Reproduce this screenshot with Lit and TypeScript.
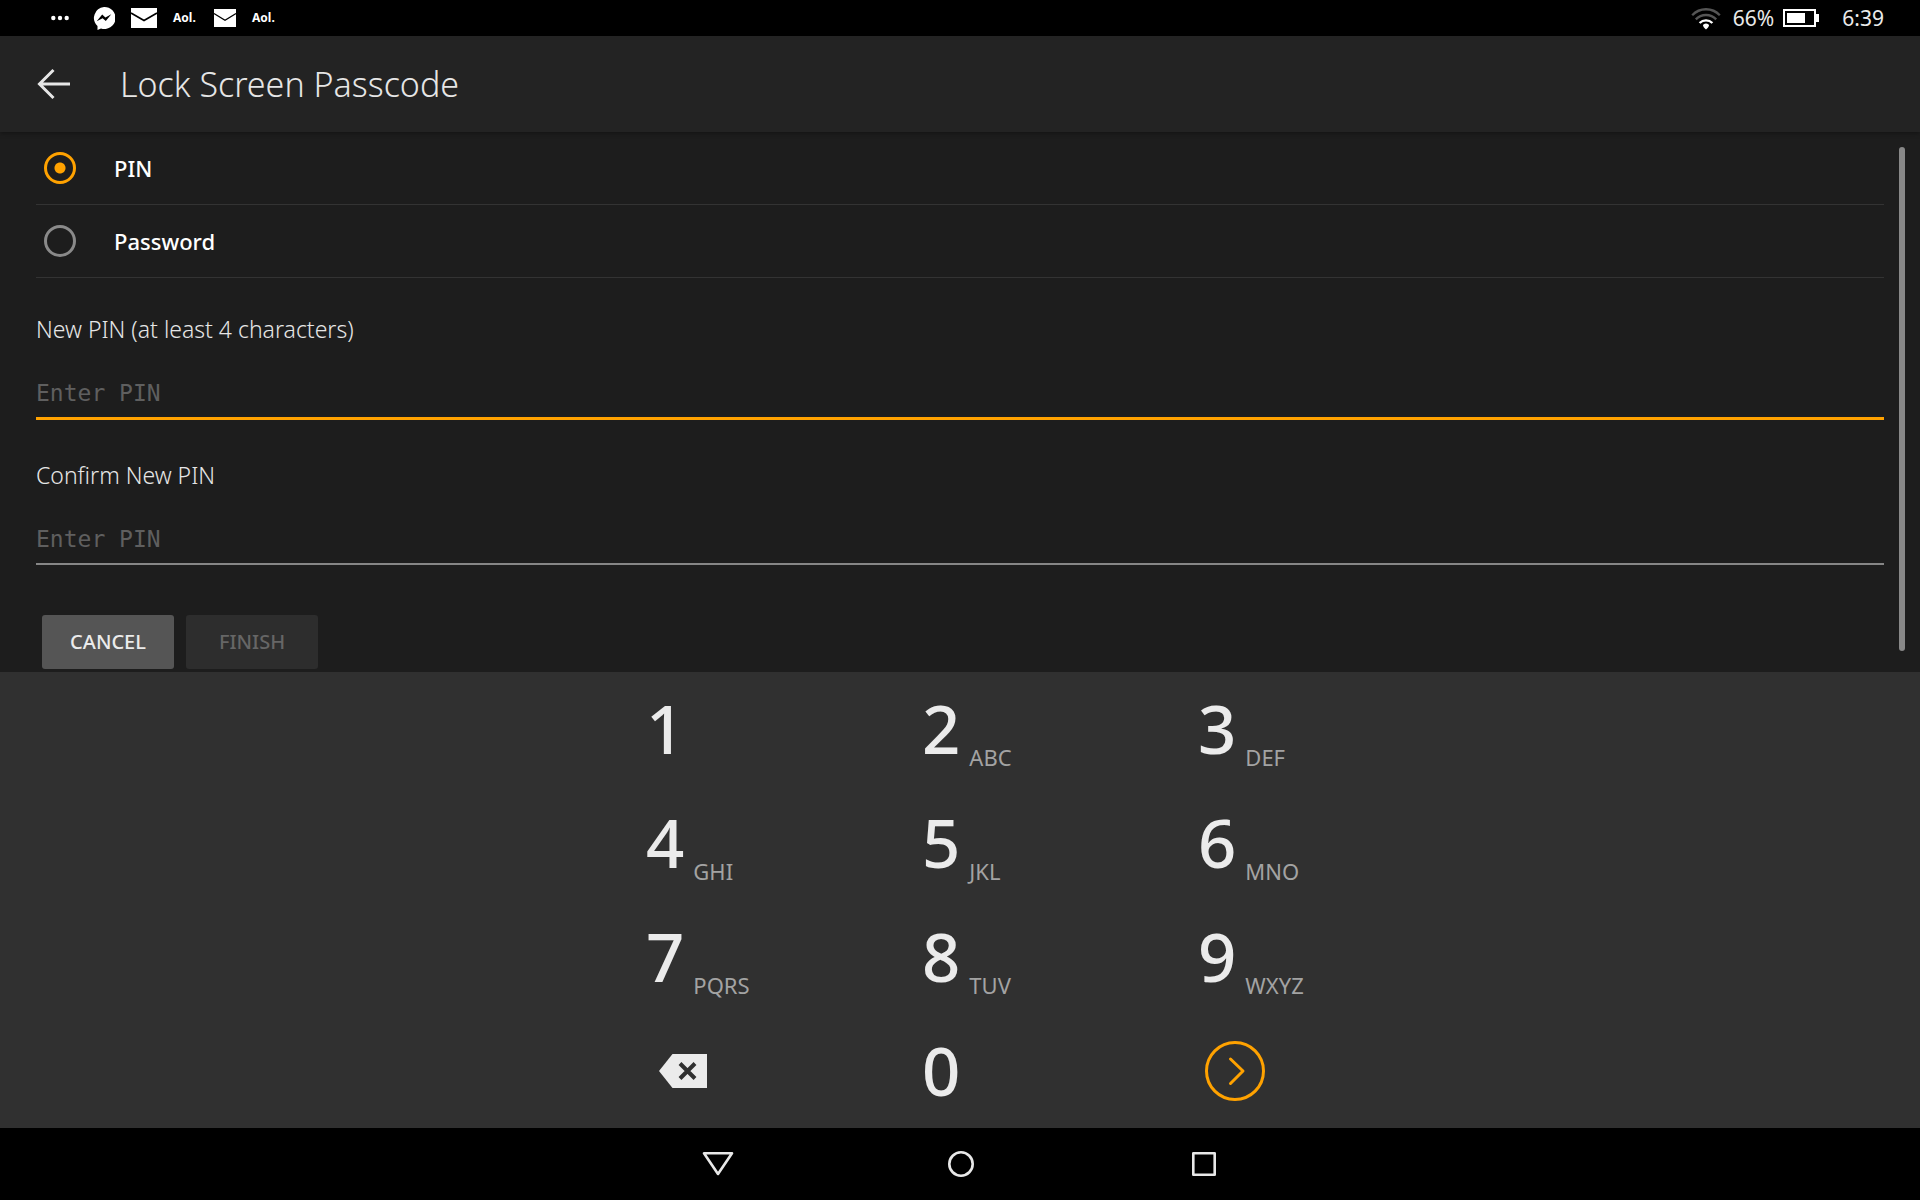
import { LitElement, html, css, svg } from "lit";
import { customElement, property, state } from "lit/decorators.js";

interface Key {
  digit: string;
  letters: string;
}

const KEYS: Key[] = [
  { digit: "1", letters: "" },
  { digit: "2", letters: "ABC" },
  { digit: "3", letters: "DEF" },
  { digit: "4", letters: "GHI" },
  { digit: "5", letters: "JKL" },
  { digit: "6", letters: "MNO" },
  { digit: "7", letters: "PQRS" },
  { digit: "8", letters: "TUV" },
  { digit: "9", letters: "WXYZ" },
];

@customElement("status-bar")
class StatusBar extends LitElement {
  static styles = css`
    :host {
      display: flex;
      justify-content: space-between;
      align-items: center;
      height: 36px;
      padding: 0 36px 0 50px;
      background: #000;
      color: #eaeaea;
    }
    .group {
      display: flex;
      align-items: center;
    }
    .left {
      gap: 16px;
    }
    .dots {
      margin-right: 7px;
    }
    .aol {
      width: 25px;
      font: 700 12px/16px "Noto Sans", sans-serif;
      color: #fff;
    }
    .text {
      font: 400 21px/36px "Noto Sans", sans-serif;
    }
    .wifi {
      margin-right: 12px;
    }
    .battery {
      margin: 0 22px 0 9px;
    }
    svg {
      display: block;
    }
  `;

  render() {
    const mail = (w: number, h: number) => html`
      <svg width=${w} height=${h} viewBox="0 0 26 20" preserveAspectRatio="none">
        <rect width="26" height="20" fill="#fff" />
        <path d="M0 5 L13 12.5 L26 5" fill="none" stroke="#000" stroke-width="1.6" />
      </svg>`;
    return html`
      <div class="group left">
        <svg class="dots" width="20" height="6" viewBox="0 0 20 6" fill="#fff">
          <circle cx="3.3" cy="3" r="2.2" />
          <circle cx="10" cy="3" r="2.2" />
          <circle cx="16.7" cy="3" r="2.2" />
        </svg>
        <svg width="22" height="24" viewBox="0 0 22 24">
          <path d="M11 1a11 11 0 1 1-3 21.400L4.500 24V20A11 11 0 0 1 11 1z" fill="#fff" />
          <path d="M3.700 15.300 9.200 8.600 12.400 11.500 18.300 8.300 12.800 15 9.600 12.200z" fill="#000" />
        </svg>
        ${mail(26, 20)}
        <span class="aol">Aol.</span>
        ${mail(22, 18)}
        <span class="aol">Aol.</span>
      </div>
      <div class="group">
        <svg class="wifi" width="30" height="24" viewBox="0 0 30 24" fill="none" stroke-width="2.300">
          <path d="M1.200 9.200A19 19 0 0 1 28.800 9.200" stroke="#555" />
          <path d="M4.800 13.400A14 14 0 0 1 25.200 13.400" stroke="#555" />
          <path d="M8.600 17A9 9 0 0 1 21.400 17" stroke="#fff" />
          <path d="M15 17.400c1.800 0 3 1 3 2.200 0 1-1.600 2.700-3 4-1.400-1.300-3-3-3-4 0-1.200 1.200-2.200 3-2.200z" fill="#fff" />
        </svg>
        <span class="text">66%</span>
        <svg class="battery" width="37" height="18" viewBox="0 0 37 18">
          <rect x="1" y="1" width="31" height="16" fill="none" stroke="#fff" stroke-width="2" />
          <rect x="33" y="5" width="3" height="8" fill="#fff" />
          <rect x="4" y="4" width="18" height="10" fill="#fff" />
        </svg>
        <span class="text">6:39</span>
      </div>
    `;
  }
}

@customElement("pin-field")
class PinField extends LitElement {
  @property() label = "";
  @property({ type: Boolean, reflect: true }) active = false;

  static styles = css`
    :host {
      display: flex;
      flex-direction: column;
      align-items: stretch;
      gap: 28px;
      height: 146px;
      box-sizing: border-box;
      padding-top: 35px;
    }
    label {
      font: 300 23px/32px "Noto Sans", sans-serif;
      color: #e6e6e6;
    }
    input {
      height: 39px;
      margin: 0;
      padding: 0 0 5px;
      border: 0;
      border-bottom: 2px solid #868686;
      border-radius: 0;
      outline: none;
      background: none;
      color: #eaeaea;
      font: 400 23px/32px "DejaVu Sans Mono", monospace;
    }
    input::placeholder {
      color: #5f5f5f;
      opacity: 1;
    }
    :host([active]) input {
      border-bottom: 3px solid #ffa200;
    }
  `;

  render() {
    return html`
      <label for="pin">${this.label}</label>
      <input id="pin" type="text" inputmode="numeric" placeholder="Enter PIN" />
    `;
  }
}

@customElement("pin-keypad")
class PinKeypad extends LitElement {
  static styles = css`
    :host {
      display: flex;
      justify-content: center;
      background: #303030;
    }
    .pad {
      display: grid;
      grid-template-columns: repeat(3, 276px);
      grid-auto-rows: 114px;
    }
    button {
      display: flex;
      margin: 0;
      border: 0;
      padding: 0;
      background: none;
      color: #ebebeb;
      align-items: center;
    }
    .key {
      padding: 0 0 0 100px;
      gap: 9px;
      align-items: baseline;
    }
    .digit {
      font: 500 67px/112px "Noto Sans", sans-serif;
    }
    .letters {
      position: relative;
      top: 12px;
      font: 400 22px/28px "Noto Sans", sans-serif;
      color: #a3a3a3;
    }
    .icon {
      justify-content: center;
      padding-right: 2px;
    }
  `;

  private key(k: Key) {
    return html`<button class="key" type="button">
      <span class="digit">${k.digit}</span>
      <span class="letters">${k.letters}</span>
    </button>`;
  }

  render() {
    return html`
      <div class="pad">
        ${KEYS.map((k) => this.key(k))}
        <button class="icon" type="button" aria-label="Delete">
          <svg width="48" height="34" viewBox="0 0 48 34">
            <path d="M0 17 13.500 0H48V34H13.500z" fill="#ebebeb" />
            <path d="M21 9.500 36 24.500M36 9.500 21 24.500" stroke="#303030" stroke-width="4" />
          </svg>
        </button>
        ${this.key({ digit: "0", letters: "" })}
        <button class="icon" type="button" aria-label="Next">
          <svg width="60" height="60" viewBox="0 0 60 60" fill="none" stroke="#ffa200">
            <circle cx="30" cy="30" r="28.500" stroke-width="3" />
            <path d="M25.500 18 38 30 25.500 42.500" stroke-width="3" stroke-linecap="round" stroke-linejoin="round" />
          </svg>
        </button>
      </div>
    `;
  }
}

@customElement("nav-bar")
class NavBar extends LitElement {
  static styles = css`
    :host {
      display: flex;
      justify-content: center;
      height: 72px;
      padding-left: 2px;
      background: #000;
    }
    button {
      width: 243px;
      display: flex;
      align-items: center;
      justify-content: center;
      margin: 0;
      border: 0;
      padding: 0;
      background: none;
    }
  `;

  private icon(name: string, shape: unknown) {
    return html`<button type="button" aria-label=${name}>
      <svg width="32" height="28" viewBox="0 0 32 28" fill="none" stroke="#e8e8e8" stroke-width="2.600" stroke-linejoin="round">
        ${shape}
      </svg>
    </button>`;
  }

  render() {
    return html`
      ${this.icon("Back", svg`<path d="M2 3.300H30L16 24z" />`)}
      ${this.icon("Home", svg`<circle cx="16" cy="14" r="11.700" />`)}
      ${this.icon("Recent apps", svg`<rect x="5.300" y="3.300" width="21.400" height="21.400" />`)}
    `;
  }
}

@customElement("app-root")
class AppRoot extends LitElement {
  @state() private mode = "pin";

  static styles = css`
    :host {
      display: flex;
      flex-direction: column;
      min-height: 100vh;
      background: #1d1d1d;
      font-family: "Noto Sans", sans-serif;
    }
    .header {
      display: flex;
      align-items: center;
      gap: 50px;
      height: 96px;
      padding-left: 36px;
      background: #232323;
      box-shadow: 0 1px 5px rgba(0, 0, 0, 0.4);
      z-index: 1;
    }
    .back {
      display: flex;
      margin: 0;
      border: 0;
      padding: 0;
      background: none;
    }
    h1 {
      margin: 0;
      font-size: 34px;
      line-height: 48px;
      font-weight: 300;
      color: #e6e6e6;
    }
    .content {
      position: relative;
      flex: 1;
      padding: 0 36px;
    }
    .option {
      display: flex;
      align-items: center;
      gap: 38px;
      height: 72px;
      padding-left: 8px;
      border-bottom: 1px solid #333;
      font-size: 22px;
      line-height: 32px;
      font-weight: 500;
      color: #fff;
    }
    .radio {
      appearance: none;
      box-sizing: border-box;
      width: 32px;
      height: 32px;
      margin: 0;
      border: 3px solid #8a8a8a;
      border-radius: 50%;
    }
    .radio:checked {
      border-color: #ffa200;
      background: radial-gradient(circle, #ffa200 5px, transparent 6px);
    }
    .actions {
      display: flex;
      gap: 12px;
      padding: 45px 6px 3px;
    }
    .action {
      width: 132px;
      height: 54px;
      margin: 0;
      border: 0;
      padding: 0;
      border-radius: 3px;
      background: #555;
      color: #ebebeb;
      font: 500 20px/28px "Noto Sans", sans-serif;
    }
    .action:disabled {
      background: #2d2d2d;
      color: #666;
    }
    .scrollbar {
      position: absolute;
      top: 15px;
      right: 15px;
      bottom: 21px;
      width: 6px;
      border-radius: 3px;
      background: #888;
    }
  `;

  private option(value: string, label: string) {
    return html`<label class="option">
      <input
        class="radio"
        type="radio"
        name="kind"
        .checked=${this.mode === value}
        @change=${() => (this.mode = value)}
      />
      ${label}
    </label>`;
  }

  render() {
    return html`
      <status-bar></status-bar>
      <header class="header">
        <button class="back" type="button" aria-label="Back">
          <svg width="34" height="32" viewBox="0 0 34 32" fill="none" stroke="#e6e6e6" stroke-width="3">
            <path d="M34 16H4M17.500 2 3.500 16 17.500 30" />
          </svg>
        </button>
        <h1>Lock Screen Passcode</h1>
      </header>
      <main class="content">
        ${this.option("pin", "PIN")} ${this.option("password", "Password")}
        <pin-field label="New PIN (at least 4 characters)" active></pin-field>
        <pin-field label="Confirm New PIN"></pin-field>
        <div class="actions">
          <button class="action" type="button">CANCEL</button>
          <button class="action" type="button" disabled>FINISH</button>
        </div>
        <div class="scrollbar"></div>
      </main>
      <pin-keypad></pin-keypad>
      <nav-bar></nav-bar>
    `;
  }
}
